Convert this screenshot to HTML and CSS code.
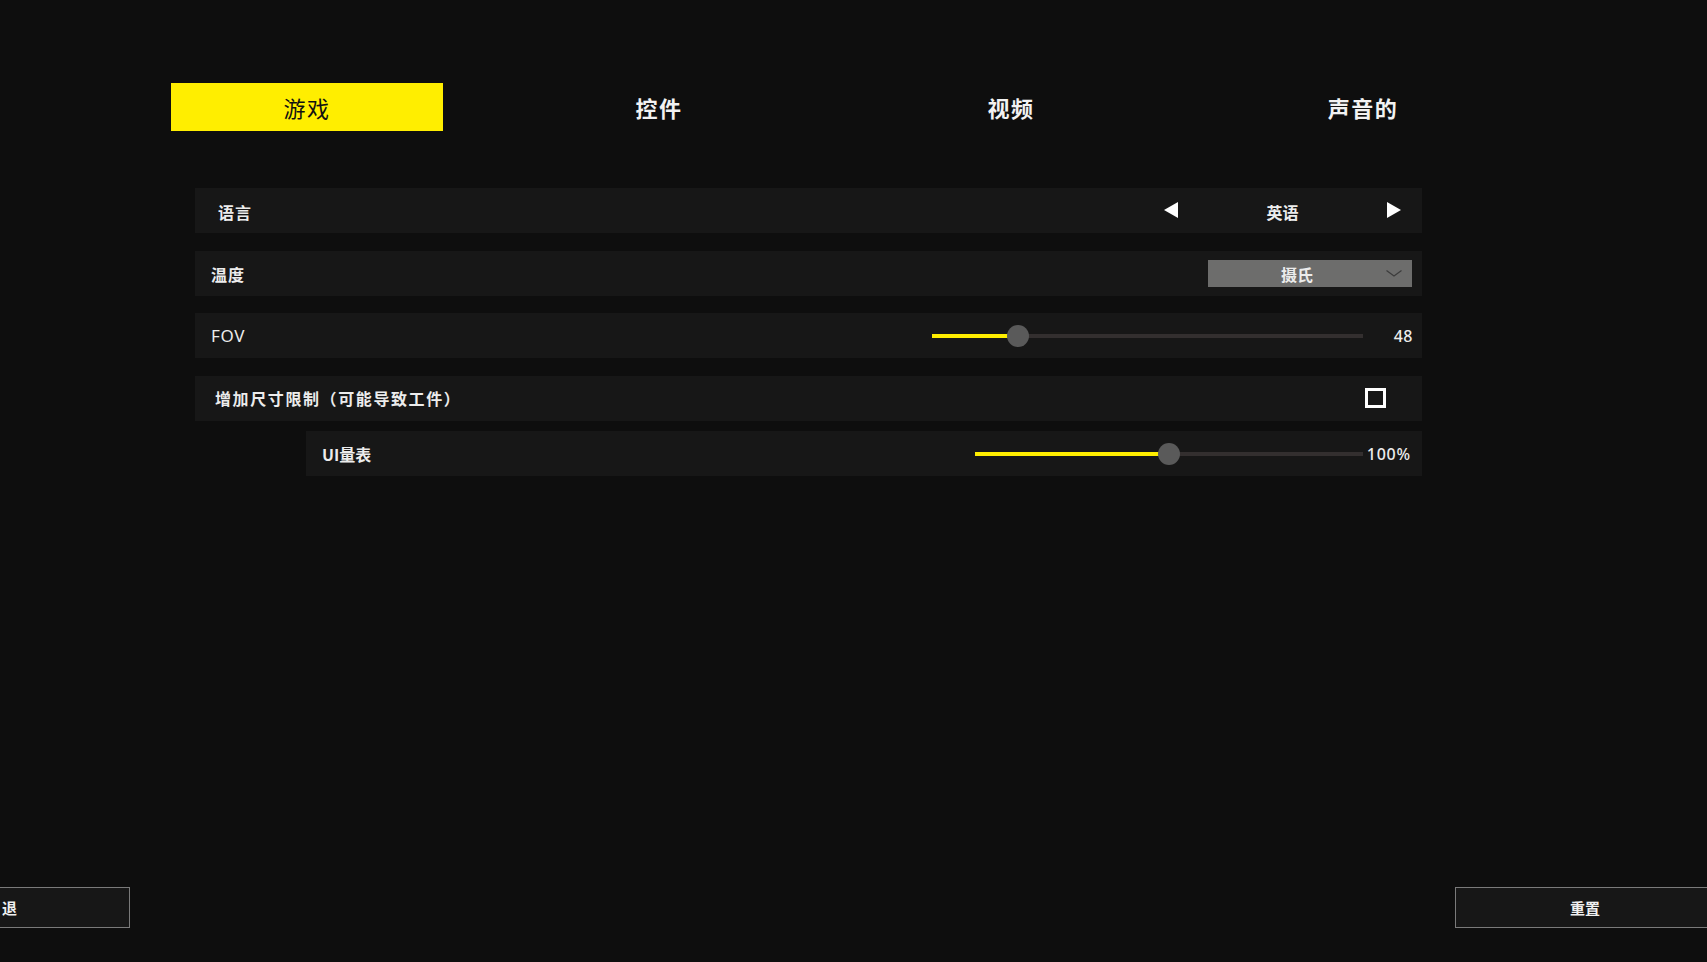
FILE: index.html
```html
<!DOCTYPE html>
<html lang="zh-CN">
<head>
<meta charset="utf-8">
<title>设置</title>
<link rel="stylesheet" href="styles.css">
</head>
<body>
<div class="page">
  <nav class="tabs">
    <div class="tab active">游戏</div>
    <div class="tab">控件</div>
    <div class="tab">视频</div>
    <div class="tab">声音的</div>
  </nav>

  <section class="settings">
    <div class="row">
      <span class="label label-lang">语言</span>
      <div class="selector">
        <svg class="arrow" width="14" height="16" viewBox="0 0 14 16"><polygon points="14,0 14,16 0,8" fill="#fff"/></svg>
        <span class="selector-value">英语</span>
        <svg class="arrow" width="14" height="16" viewBox="0 0 14 16"><polygon points="0,0 0,16 14,8" fill="#fff"/></svg>
      </div>
    </div>

    <div class="row">
      <span class="label">温度</span>
      <div class="dropdown">
        <span class="dropdown-value">摄氏</span>
        <svg class="chevron" width="16" height="7" viewBox="0 0 16 7"><polyline points="0.5,0.5 8,6 15.5,0.5" fill="none" stroke="#3c3c3c" stroke-width="1.2"/></svg>
      </div>
    </div>

    <div class="row">
      <span class="label label-latin">FOV</span>
      <div class="slider slider-fov">
        <div class="track"><div class="fill" style="width:20%"></div><div class="thumb" style="left:20%"></div></div>
      </div>
      <span class="value">48</span>
    </div>

    <div class="row row-check">
      <span class="label label-wide">增加尺寸限制（可能导致工件）</span>
      <span class="checkbox"></span>
    </div>

    <div class="row row-sub">
      <span class="label label-ui">UI量表</span>
      <div class="slider slider-ui">
        <div class="track"><div class="fill" style="width:50%"></div><div class="thumb" style="left:50%"></div></div>
      </div>
      <span class="value value-pct">100%</span>
    </div>
  </section>

  <footer class="footer">
    <button class="btn btn-back">退</button>
    <button class="btn btn-reset">重置</button>
  </footer>
</div>
</body>
</html>
```

FILE: styles.css
```css
html, body {
  margin: 0;
  padding: 0;
  background: #0e0e0e;
  overflow: hidden;
}

body {
  font-family: "Noto Sans CJK SC", "Noto Sans", sans-serif;
  color: #ececec;
}

.page {
  width: 1707px;
  height: 962px;
  display: flex;
  flex-direction: column;
  padding-top: 83px;
  box-sizing: border-box;
}

.tabs {
  display: grid;
  grid-template-columns: repeat(4, 272px);
  column-gap: 80px;
  margin-left: 171px;
}

.tab {
  height: 48px;
  display: flex;
  align-items: center;
  justify-content: center;
  font-size: 22px;
  font-weight: 700;
  color: #f2f2f2;
  letter-spacing: 1.5px;
}

.tab.active {
  background: #ffee00;
  color: #111;
  font-weight: 400;
}

.settings {
  margin-top: 57px;
  margin-left: 195px;
  width: 1227px;
  display: flex;
  flex-direction: column;
}

.row {
  height: 45px;
  background: #171717;
  display: flex;
  align-items: center;
  padding-left: 16px;
  padding-right: 9px;
  box-sizing: border-box;
  margin-bottom: 17.6px;
}

.label {
  font-size: 16px;
  font-weight: 700;
  letter-spacing: 1px;
  padding-top: 1px;
  flex: 1;
}

.label-lang {
  padding-left: 7px;
  padding-top: 3px;
}

.label-latin {
  font-family: "Noto Sans", "Noto Sans CJK SC", sans-serif;
  font-size: 17px;
  font-weight: 400;
  letter-spacing: 0.6px;
  padding-top: 0;
}

.label-wide {
  padding-left: 4px;
  padding-top: 0;
  letter-spacing: 1.6px;
}

.label-ui {
  letter-spacing: 0;
  padding-top: 0;
}

.selector {
  width: 237px;
  display: flex;
  align-items: center;
  justify-content: space-between;
  margin-right: 12px;
}

.arrow {
  display: block;
  margin-top: -2px;
}

.selector-value {
  font-size: 16px;
  font-weight: 700;
  padding-top: 3px;
}

.dropdown {
  width: 204px;
  height: 27px;
  background: #6d6d6c;
  display: flex;
  align-items: center;
  box-sizing: border-box;
  padding-right: 10px;
  margin-right: 1px;
}

.dropdown-value {
  flex: 1;
  text-align: center;
  font-size: 16px;
  font-weight: 700;
  padding-top: 2px;
}

.chevron {
  display: block;
}

.slider {
  display: flex;
  align-items: center;
}

.slider-fov {
  width: 431px;
}

.slider-ui {
  width: 388px;
}

.track {
  position: relative;
  width: 100%;
  height: 4px;
  background: #332f2f;
}

.fill {
  height: 100%;
  background: #ffee00;
}

.thumb {
  position: absolute;
  top: 50%;
  width: 22px;
  height: 22px;
  border-radius: 50%;
  background: #5a5a5a;
  transform: translate(-50%, -50%);
}

.value {
  width: 50px;
  text-align: right;
  font-family: "Noto Sans", sans-serif;
  font-size: 16px;
  font-weight: 500;
  letter-spacing: 0.5px;
}

.value-pct {
  width: 48px;
  margin-right: 2px;
  letter-spacing: 0.8px;
}

.row-check {
  padding-right: 36px;
}

.checkbox {
  width: 21px;
  height: 20px;
  border: 3px solid #fff;
  box-sizing: border-box;
}

.row-sub {
  margin-left: 111px;
  margin-top: -7px;
}

.footer {
  margin-top: auto;
  margin-bottom: 34px;
  margin-right: -8px;
  display: flex;
  justify-content: space-between;
}

.btn {
  height: 41px;
  background: #171717;
  border: 1px solid #7a7a7a;
  color: #f0f0f0;
  font-family: "Noto Sans CJK SC", "Noto Sans", sans-serif;
  font-size: 15px;
  font-weight: 700;
  padding: 0;
}

.btn-back {
  width: 131px;
  margin-left: -1px;
  text-align: left;
  padding-left: 2px;
}

.btn-reset {
  width: 260px;
  text-align: center;
}
```
